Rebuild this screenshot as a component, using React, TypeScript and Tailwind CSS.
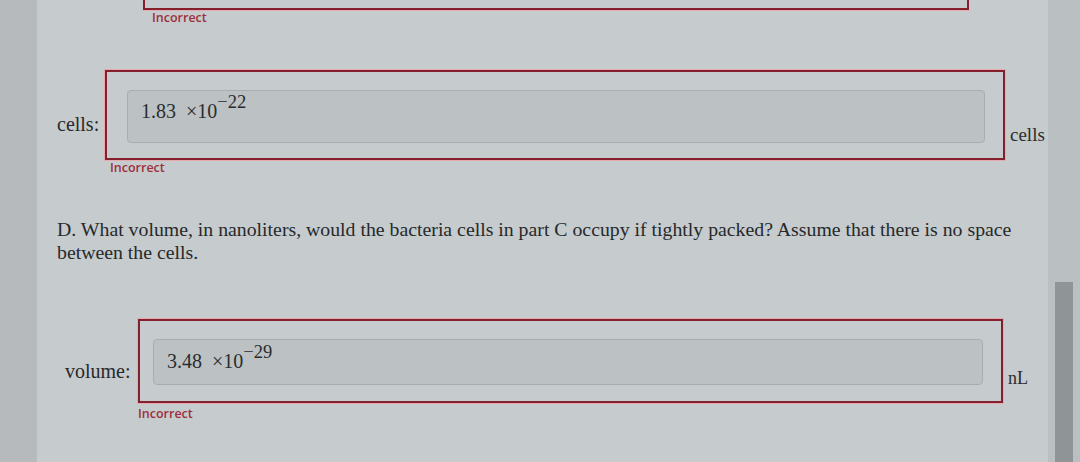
import type { ReactNode } from 'react'

function Incorrect({ className = '' }: { className?: string }) {
  return (
    <div
      className={`text-[12.5px] font-semibold leading-[13px] text-[#9e2f3c] ${className}`}
      style={{ fontFamily: '"Open Sans", "Liberation Sans", sans-serif' }}
    >
      Incorrect
    </div>
  )
}

function Sci({ base, exp }: { base: string; exp: string }) {
  return (
    <span className="text-[20px] leading-[24px] text-[#2a2d2f]">
      {base}
      <span className="ml-[10px]">×10</span>
      <span className="relative -top-[10px] text-[18.5px]">−{exp}</span>
    </span>
  )
}

function AnswerBox({
  width,
  height,
  inputWidth,
  inputHeight,
  padLeft,
  padTop,
  textTop,
  children,
}: {
  width: number
  height: number
  inputWidth: number
  inputHeight: number
  padLeft: number
  padTop: number
  textTop: number
  children: ReactNode
}) {
  return (
    <div
      className="shrink-0 border-2 border-[#84202d] shadow-[0_0_0_1px_#e6a9ae]"
      style={{ width, height, paddingLeft: padLeft, paddingTop: padTop }}
    >
      <div
        className="rounded-[4px] border border-[#a8adaf] bg-[#bcc1c3] pl-[13px]"
        style={{ width: inputWidth, height: inputHeight, paddingTop: textTop }}
      >
        {children}
      </div>
    </div>
  )
}

export default function App() {
  return (
    <div
      className="flex h-[462px] w-[1080px] overflow-hidden bg-[#c5cacc]"
      style={{ fontFamily: '"Liberation Serif", "Times New Roman", serif' }}
    >
      <div className="w-[37px] shrink-0 bg-[#b6babc]" />

      <div className="w-[1011px] shrink-0 bg-[#c6cbcd] text-[20px] text-[#26292b]">
        {/* tail of previous answer box */}
        <div className="ml-[106px] h-[10px] w-[826px] border-x-2 border-b-2 border-[#84202d] shadow-[0_1px_0_0_#e6a9ae]" />
        <Incorrect className="ml-[115px] mt-[1px]" />

        {/* cells row */}
        <div className="mt-[46px] flex items-center">
          <div className="w-[68px] pl-[20px] pt-[18px]">cells:</div>
          <AnswerBox width={900} height={90} inputWidth={858} inputHeight={53} padLeft={20} padTop={18} textTop={5}>
            <Sci base="1.83" exp="22" />
          </AnswerBox>
          <div className="ml-[5px] pt-[40px] text-[19px] text-[#2a2d2f]">cells</div>
        </div>
        <Incorrect className="ml-[73px] mt-[1px]" />

        {/* question D */}
        <p className="ml-[20px] mt-[44px] w-[975px] text-[19.8px] leading-[23px]">
          D. What volume, in nanoliters, would the bacteria cells in part C occupy if tightly packed? Assume that there is no space between the cells.
        </p>

        {/* volume row */}
        <div className="mt-[55px] flex items-center">
          <div className="w-[101px] pl-[28px] pt-[20px]">volume:</div>
          <AnswerBox width={865} height={84} inputWidth={830} inputHeight={46} padLeft={13} padTop={18} textTop={6}>
            <Sci base="3.48" exp="29" />
          </AnswerBox>
          <div className="ml-[5px] pt-[34px] text-[18px] text-[#2a2d2f]">nL</div>
        </div>
        <Incorrect className="ml-[101px] mt-[4px]" />
      </div>

      <div className="flex w-[32px] shrink-0 justify-center bg-[#babfc1]">
        <div className="mt-[282px] h-[180px] w-[18px] bg-[#8f9597]" />
      </div>
    </div>
  )
}
